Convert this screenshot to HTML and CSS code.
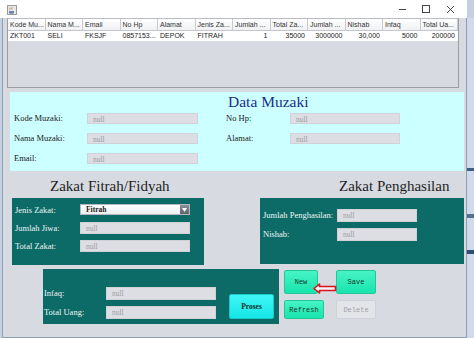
FILE: index.html
```html
<!DOCTYPE html>
<html>
<head>
<meta charset="utf-8">
<link rel="stylesheet" href="styles.css">
</head>
<body>
<div class="screen">
  <div class="desk-strip"></div>
  <div class="titlebar">
    <svg class="app-icon" width="10" height="10" viewBox="0 0 10 10"><rect x="0.5" y="0.5" width="9" height="9" fill="#e8e8e8" stroke="#9a9a9a"/><path d="M3 2.5c1 1-1 1.5 0 2.5M5 2c1 1-1 1.5 0 2.5" stroke="#c47a3a" fill="none" stroke-width="0.8"/><path d="M2 6h5v1.5c0 .8-.6 1.2-1.2 1.2H3.2C2.6 8.7 2 8.3 2 7.5z" fill="#6a86b0"/></svg>
    <div class="controls">
      <span class="ctl min"></span>
      <span class="ctl max"></span>
      <span class="ctl close">
        <svg width="9" height="9" viewBox="0 0 9 9"><path d="M1 1L8 8M8 1L1 8" stroke="#333" stroke-width="0.9"/></svg>
      </span>
    </div>
  </div>
  <div class="window">
    <div class="table-pane">
      <div class="thead">
        <div class="th">Kode Mu...</div><div class="th">Nama M...</div><div class="th">Email</div><div class="th">No Hp</div><div class="th">Alamat</div><div class="th">Jenis Za...</div><div class="th">Jumlah ...</div><div class="th">Total Za...</div><div class="th">Jumlah ...</div><div class="th">Nishab</div><div class="th">Infaq</div><div class="th">Total Ua...</div>
      </div>
      <div class="trow">
        <div class="td">ZKT001</div><div class="td">SELI</div><div class="td">FKSJF</div><div class="td">0857153...</div><div class="td">DEPOK</div><div class="td">FITRAH</div><div class="td num">1</div><div class="td num">35000</div><div class="td num">3000000</div><div class="td num">30,000</div><div class="td num">5000</div><div class="td num">200000</div>
      </div>
    </div>

    <div class="muzaki">
      <div class="muzaki-title">Data Muzaki</div>
      <div class="muzaki-grid">
        <span class="lbl">Kode Muzaki:</span><span class="field">null</span>
        <span class="lbl lbl-r">No Hp:</span><span class="field">null</span>
        <span class="lbl">Nama Muzaki:</span><span class="field">null</span>
        <span class="lbl lbl-r">Alamat:</span><span class="field">null</span>
        <span class="lbl">Email:</span><span class="field">null</span>
      </div>
    </div>

    <div class="zakat-row">
      <div class="zcol">
        <div class="zhead zhead-left">Zakat Fitrah/Fidyah</div>
        <div class="teal teal-fitrah">
          <span class="tlbl">Jenis Zakat:</span>
          <span class="combo">Fitrah<span class="combo-btn"><svg width="5" height="4" viewBox="0 0 5 4"><path d="M0 0h5L2.5 4z" fill="#fff"/></svg></span></span>
          <span class="tlbl">Jumlah Jiwa:</span><span class="field">null</span>
          <span class="tlbl">Total Zakat:</span><span class="field">null</span>
        </div>
      </div>
      <div class="zcol">
        <div class="zhead zhead-right">Zakat Penghasilan</div>
        <div class="teal teal-hasil">
          <span class="tlbl">Jumlah Penghasilan:</span><span class="field">null</span>
          <span class="tlbl">Nishab:</span><span class="field">null</span>
        </div>
      </div>
    </div>

    <div class="bottom-row">
      <div class="teal teal-total">
        <span class="tlbl">Infaq:</span><span class="field">null</span>
        <button class="proses">Proses</button>
        <span class="tlbl">Total Uang:</span><span class="field">null</span>
      </div>
      <div class="actions">
        <button class="btn btn-new">New</button>
        <button class="btn">Save</button>
        <button class="btn">Refresh</button>
        <button class="btn btn-off">Delete</button>
        <svg class="arrow" width="24" height="11" viewBox="0 0 24 11"><path d="M1 5.5L6.5 1v2.5h16v4h-16V10z" fill="#f4f6f8" stroke="#d8141c" stroke-width="1.6" stroke-linejoin="round"/></svg>
      </div>
    </div>
  </div>
</div>
</body>
</html>
```

FILE: styles.css
```css
html, body {
  margin: 0;
  padding: 0;
}
body {
  width: 474px;
  height: 338px;
  overflow: hidden;
  background: #c3d1e3;
}
.screen {
  position: relative;
  width: 474px;
  height: 338px;
}
.desk-strip {
  position: absolute;
  right: 0;
  top: 18px;
  width: 7px;
  height: 320px;
  background: linear-gradient(180deg, #cfdbea 0, #cfdbea 150px, #3d5e86 150px, #3d5e86 153px, #cfdbea 153px, #cfdbea 196px, #52708f 196px, #52708f 200px, #cfdbea 200px, #cfdbea 232px, #2e4d73 232px, #2e4d73 236px, #cfdbea 236px);
}
.titlebar {
  position: relative;
  width: 467px;
  height: 18px;
  background: #ffffff;
  display: flex;
  align-items: center;
}
.app-icon {
  margin-left: 7px;
  margin-top: 1px;
}
.controls {
  margin-left: auto;
  display: flex;
  align-items: center;
  height: 18px;
  margin-right: 5px;
}
.ctl {
  display: flex;
  align-items: center;
  justify-content: center;
  width: 24px;
  height: 18px;
}
.min::before {
  content: "";
  width: 7px;
  height: 1px;
  background: #444;
  margin-top: 1px;
}
.max::before {
  content: "";
  width: 6px;
  height: 6px;
  border: 1px solid #444;
}
.window {
  margin-left: 2px;
  width: 463px;
  height: 319px;
  background: #d7dae1;
  border-left: 1px solid #8d9db3;
  border-right: 1px solid #8d9db3;
  border-bottom: 1px solid #8d9db3;
  font-family: "Liberation Serif", serif;
}
.table-pane {
  margin-left: 4px;
  width: 450px;
  height: 68px;
  border: 1px solid #9a9da3;
  border-top-color: #b9bcc2;
  background: #d7dae1;
  font-family: "Liberation Sans", Arial, sans-serif;
  font-size: 7px;
  color: #222;
}
.thead, .trow {
  display: grid;
  grid-template-columns: repeat(12, 1fr);
}
.thead {
  height: 11px;
  background: linear-gradient(#ffffff, #f0f1f3);
  border-bottom: 1px solid #c5c7cc;
}
.th {
  border-right: 1px solid #c9cbd0;
  padding-left: 2px;
  line-height: 11px;
  white-space: nowrap;
  overflow: hidden;
  color: #333;
  min-width: 0;
}
.trow {
  height: 10px;
  background: #ffffff;
}
.td {
  padding-left: 2px;
  padding-right: 3px;
  line-height: 10px;
  white-space: nowrap;
  overflow: hidden;
  min-width: 0;
}
.td.num {
  text-align: right;
}
.muzaki {
  margin-left: 7px;
  margin-top: 4px;
  width: 454px;
  height: 79px;
  background: #ccffff;
}
.muzaki-title {
  height: 21px;
  padding-left: 218px;
  font-size: 15.5px;
  line-height: 19px;
  color: #1b2f86;
}
.muzaki-grid {
  display: grid;
  grid-template-columns: 73px 111px 28px 64px 110px;
  grid-auto-rows: 11px;
  row-gap: 9px;
  padding-left: 4px;
}
.lbl-r {
  grid-column: 4;
}
.lbl, .tlbl {
  font-size: 8.5px;
  line-height: 11px;
  white-space: nowrap;
  align-self: center;
}
.lbl {
  color: #1a1a1a;
}
.tlbl {
  color: #eef6f6;
}
.field {
  display: block;
  background: #dcdee3;
  color: #9b9ea4;
  font-size: 7.5px;
  padding-left: 5px;
  line-height: 11px;
  height: 11px;
  border: 1px solid #d0d2d7;
  box-sizing: border-box;
}
.zakat-row {
  margin-left: 9px;
  display: grid;
  grid-template-columns: 192px 204px;
  column-gap: 56px;
}
.zhead {
  height: 27px;
  font-size: 15px;
  line-height: 30px;
  color: #1e1e1e;
  white-space: nowrap;
}
.zhead-left {
  padding-left: 38px;
}
.zhead-right {
  padding-left: 79px;
}
.teal {
  background: #0c6a67;
  box-sizing: border-box;
}
.teal-fitrah {
  height: 67px;
  display: grid;
  grid-template-columns: 65px 110px;
  grid-auto-rows: 12px;
  row-gap: 6px;
  padding: 6px 0 0 3px;
}
.teal-fitrah .field {
  height: 12px;
  line-height: 12px;
}
.combo {
  display: flex;
  align-items: center;
  height: 11px;
  background: linear-gradient(#ffffff, #eceef1);
  border: 1px solid #b4b8be;
  box-sizing: border-box;
  font-size: 7.5px;
  font-weight: bold;
  color: #222;
  padding-left: 5px;
}
.combo-btn {
  margin-left: auto;
  width: 9px;
  height: 9px;
  background: linear-gradient(#8b9098, #5f646c);
  display: flex;
  align-items: center;
  justify-content: center;
}
.teal-hasil {
  height: 66px;
  display: grid;
  grid-template-columns: 74px 80px;
  grid-auto-rows: 13px;
  row-gap: 6px;
  padding: 11px 0 0 3px;
}
.teal-hasil .field, .teal-total .field {
  height: 13px;
  line-height: 12px;
}
.bottom-row {
  margin-left: 40px;
  margin-top: 4px;
  display: flex;
  align-items: flex-start;
}
.teal-total {
  width: 236px;
  height: 55px;
  display: grid;
  grid-template-columns: 62px 110px 45px;
  grid-template-rows: 13px 13px;
  column-gap: 0;
  row-gap: 6px;
  padding: 18px 0 0 1px;
}
.proses {
  grid-column: 3;
  grid-row: 1 / span 2;
  align-self: end;
  margin-left: 13px;
  width: 45px;
  height: 25px;
  border: 1px solid #19c9c9;
  border-radius: 2px;
  background: linear-gradient(#3ff6f6, #17e6e6);
  font-family: "Liberation Serif", serif;
  font-weight: bold;
  font-size: 7.5px;
  color: #11302f;
  padding: 0;
  margin-bottom: 0;
}
.actions {
  position: relative;
  margin-left: 5px;
  margin-top: 1px;
  display: grid;
  grid-template-columns: 40px 40px;
  grid-template-rows: 24px 19px;
  column-gap: 12px;
  row-gap: 6px;
}
.btn {
  padding: 0;
  border: 1px solid #22c79a;
  border-radius: 2px;
  background: linear-gradient(#47f3c4, #19e4ae);
  font-family: "Liberation Mono", monospace;
  font-size: 7px;
  color: #173a30;
}
.btn-new {
  width: 34px;
}
.btn-off {
  background: #e2e4e8;
  border-color: #cfd2d7;
  color: #9da1a7;
}
.arrow {
  position: absolute;
  left: 29px;
  top: 13px;
}
```
